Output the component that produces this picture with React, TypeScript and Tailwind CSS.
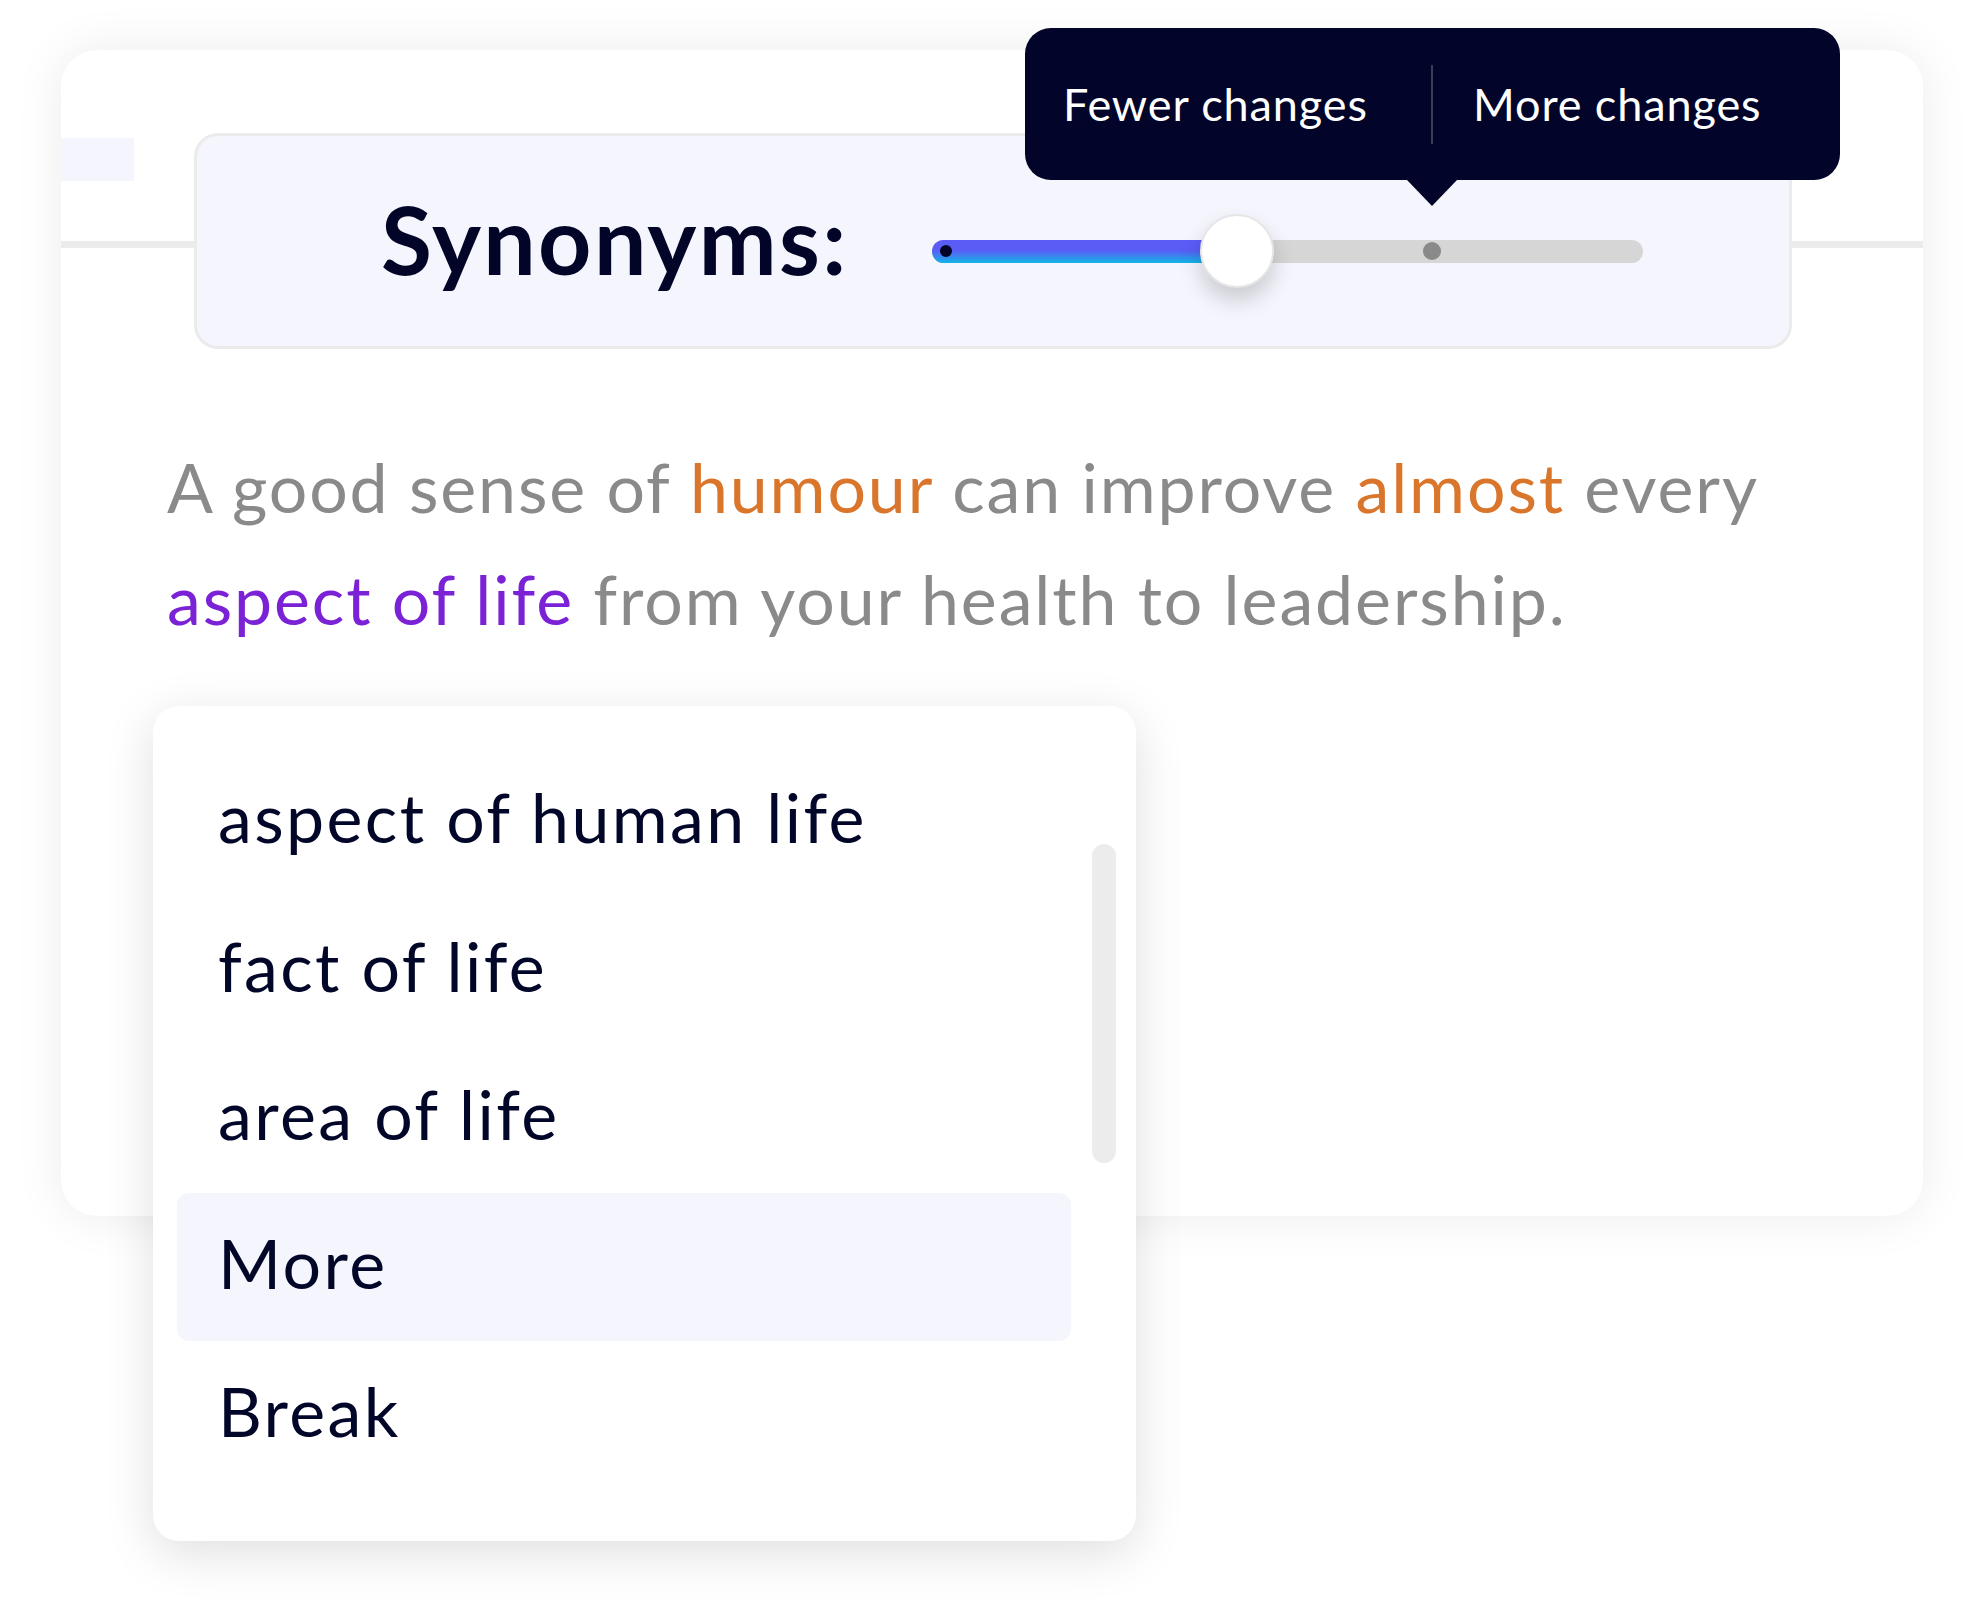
const synonyms = ["aspect of human life", "fact of life", "area of life", "More", "Break"];

function Slider() {
  return (
    <div className="mt-[20px] flex items-center w-[711px] h-[23px] rounded-full bg-[#d6d6d6]">
      {/* filled part */}
      <div className="h-full w-[310px] shrink-0 rounded-full bg-[linear-gradient(to_bottom,#5a5cf6_0%,#5a5cf6_45%,#12b6e6_100%)] flex items-center pl-[8px]">
        <div className="w-[12px] h-[12px] rounded-full bg-[#020528]" />
      </div>
      {/* thumb */}
      <div className="-ml-[42px] w-[74px] h-[74px] shrink-0 rounded-full bg-white border-2 border-[#e6e6e6] shadow-[0_12px_22px_rgba(0,0,0,0.18)]" />
      {/* middle step */}
      <div className="ml-[149px] w-[18px] h-[18px] shrink-0 rounded-full bg-[#8a8a8a]" />
    </div>
  );
}

function Tooltip() {
  return (
    <div className="absolute left-[1025px] top-[28px] w-[815px] h-[152px] rounded-[26px] bg-[#020529] flex items-center text-white text-[45px] leading-none tracking-[0.02em]">
      <div className="w-[406px] pl-[38px] whitespace-nowrap">Fewer changes</div>
      <div className="w-[2px] h-[79px] bg-[#3b3e58]" />
      <div className="pl-[40px] whitespace-nowrap">More changes</div>
      <div className="absolute top-full left-[382px] w-0 h-0 border-l-[25px] border-r-[25px] border-t-[26px] border-l-transparent border-r-transparent border-t-[#020529]" />
    </div>
  );
}

function Dropdown() {
  return (
    <div className="absolute left-[153px] top-[706px] w-[983px] h-[835px] rounded-[26px] bg-white shadow-[0_12px_50px_rgba(0,0,0,0.13)] pt-[41px] flex">
      <div className="flex flex-col pl-[24px]">
        {synonyms.map((s) => (
          <div
            key={s}
            className={`w-[894px] h-[148.5px] pb-[8px] pl-[41px] flex items-center rounded-[12px] text-[68px] leading-none tracking-[0.035em] text-[#020628] whitespace-nowrap ${
              s === "More" ? "bg-[#f5f6fd]" : ""
            }`}
          >
            {s}
          </div>
        ))}
      </div>
      {/* scrollbar */}
      <div className="mt-[97px] ml-[21px] w-[24px] h-[319px] rounded-full bg-[#ececec]" />
    </div>
  );
}

export default function App() {
  return (
    <div className="relative w-[1980px] h-[1610px] bg-white overflow-hidden font-['Lato',sans-serif]">
      <div className="pt-[50px] pl-[61px]">
        <div className="w-[1862px] h-[1166px] rounded-[36px] bg-white shadow-[0_0_50px_rgba(0,0,0,0.08)] overflow-hidden">
          {/* header strip */}
          <div className="h-[198px] border-b-[7px] border-[#ececec] pt-[88px]">
            <div className="w-[73px] h-[43px] bg-[#f5f6fd]" />
          </div>

          {/* synonyms panel */}
          <div className="relative mt-[-115px] ml-[133px] w-[1598px] h-[216px] rounded-[24px] border-[3px] border-[#ebebeb] bg-[#f5f6fd] flex items-center pl-[184px]">
            <div className="w-[551px] text-[93px] font-bold leading-none tracking-[0.025em] text-[#020528] pb-[4px]">Synonyms:</div>
            <Slider />
          </div>

          {/* paragraph */}
          <p className="mt-[82px] ml-[106px] text-[68px] leading-[112px] tracking-[0.028em] text-[#8a8a8a] whitespace-nowrap">
            A good sense of <span className="text-[#d9762b]">humour</span> can improve{" "}
            <span className="text-[#d9762b]">almost</span> every
            <br />
            <span className="text-[#7b22d6]">aspect of life</span> from your health to leadership.
          </p>
        </div>
      </div>

      <Tooltip />
      <Dropdown />
    </div>
  );
}
